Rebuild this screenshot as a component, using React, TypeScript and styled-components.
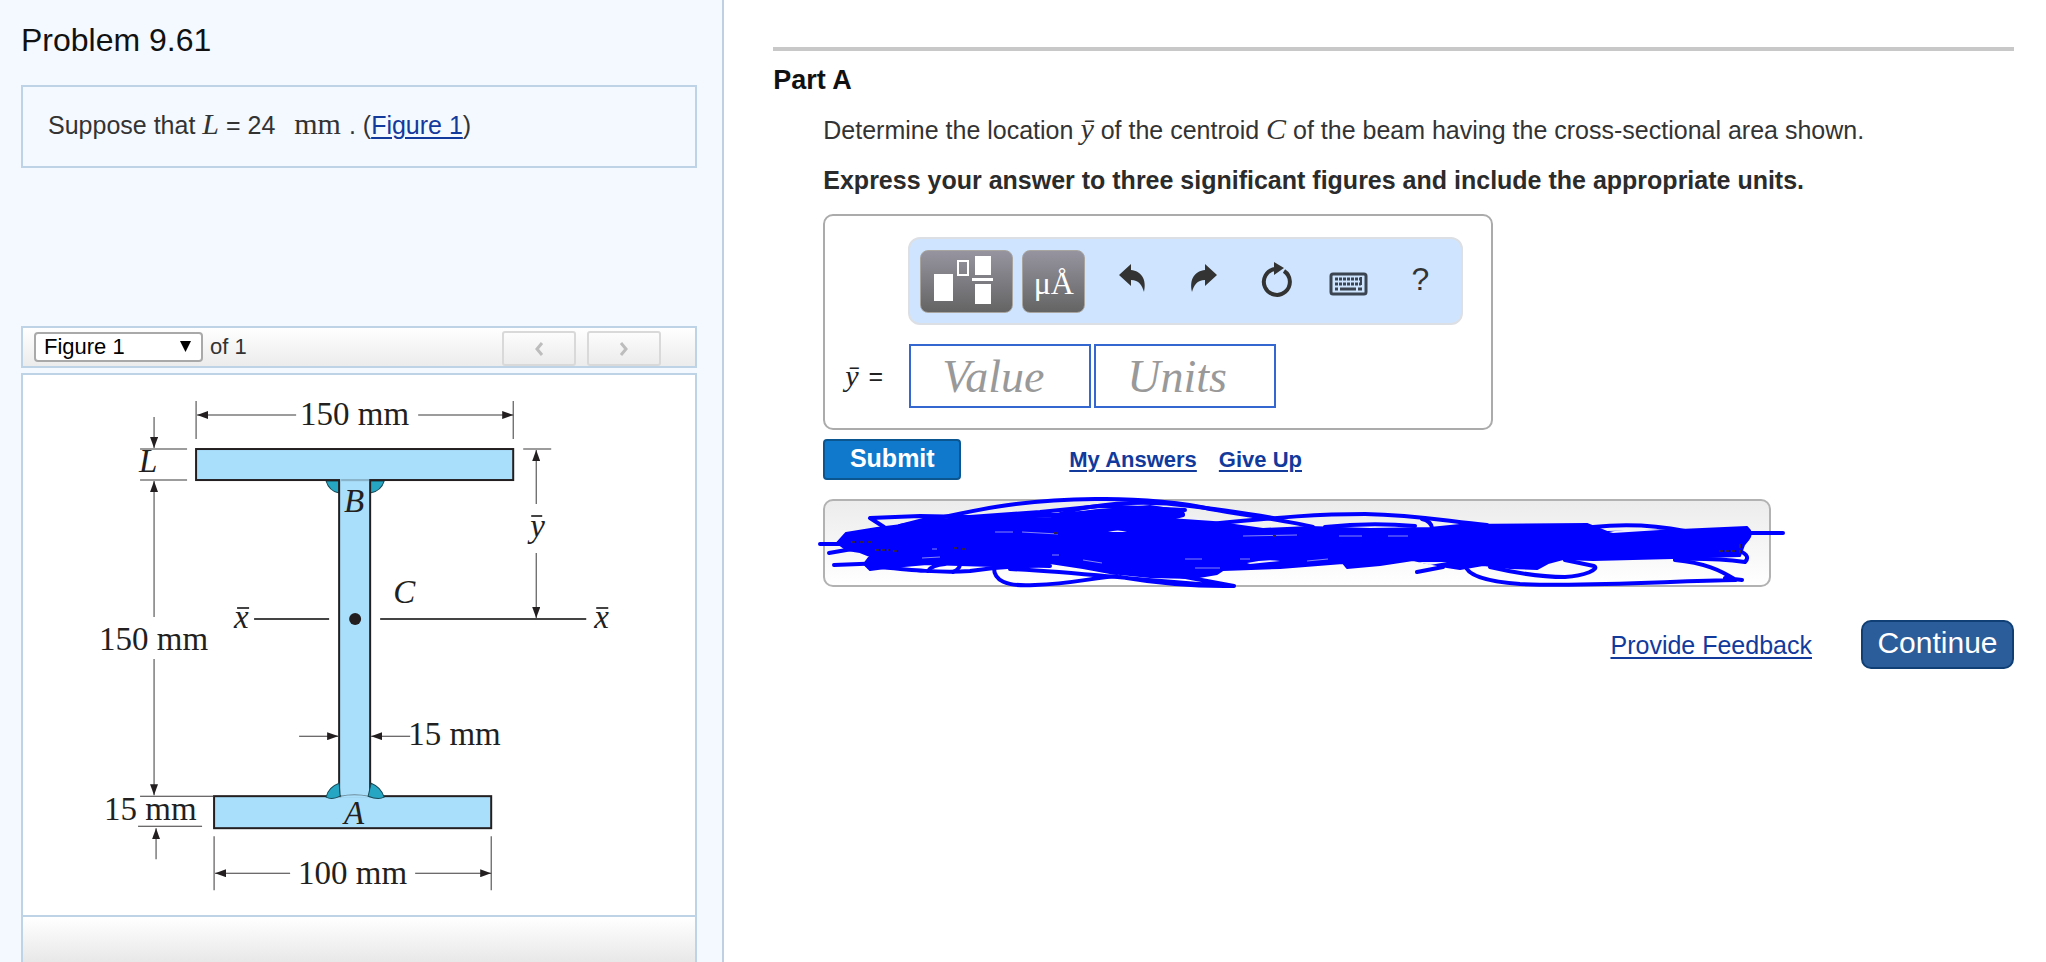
import React from "react";
import styled, { createGlobalStyle } from "styled-components";

const sans = '"Liberation Sans", Arial, sans-serif';
const serif = '"Liberation Serif", "Times New Roman", serif';

const GlobalStyle = createGlobalStyle`
  * { box-sizing: border-box; }
  body { margin: 0; background: #fff; color: #333; font-family: ${sans}; font-size: 25px; line-height: 32px; }
  h1, h2, p { margin: 0; }
`;

const Page = styled.div`
  display: grid;
  grid-template-columns: minmax(480px, 354fr) 646fr;
  min-height: 100vh;
`;

const Sidebar = styled.aside`
  display: flex;
  flex-direction: column;
  padding: 22px 25px 0 21px;
  background: #f4f9ff;
  border-right: 2px solid #bfd0e2;
`;

const ProblemTitle = styled.h1`
  color: #111;
  font-size: 32px;
  font-weight: 400;
  line-height: 36px;
`;

const Prompt = styled.p`
  margin-top: 27px;
  padding: 22px 25px 25px;
  border: 2px solid #bfd3e6;
`;

const Link = styled.a<{ $bold?: boolean }>`
  color: #123a9c;
  font-size: ${(p) => (p.$bold ? "22px" : "inherit")};
  font-weight: ${(p) => (p.$bold ? 700 : 400)};
  text-decoration: underline;
  text-decoration-thickness: 2px;
  text-underline-offset: 3px;
`;

const MathSymbol = styled.i`
  font-family: ${serif};
  font-size: 30px;
  line-height: 1;
`;

const Unit = styled.span`
  margin: 0 8px 0 12px;
  font-family: ${serif};
  font-size: 30px;
  line-height: 1;
`;

const FigureBar = styled.div`
  display: flex;
  align-items: center;
  gap: 7px;
  height: 42px;
  margin-top: 158px;
  padding: 0 34px 0 11px;
  background: linear-gradient(#fff, #ececec);
  border: 2px solid #bfd3e6;
  font-size: 22px;
  line-height: 28px;
`;

const SelectWrap = styled.div`
  position: relative;
  width: 169px;
  height: 30px;
`;

const FigureSelect = styled.select`
  width: 100%;
  height: 100%;
  padding: 0 8px;
  appearance: none;
  background: #fff;
  border: 2px solid #a9a9a9;
  border-radius: 4px;
  color: #000;
  font-family: ${sans};
  font-size: 22px;
  line-height: 24px;
`;

const SelectArrow = styled.svg`
  position: absolute;
  top: 9px;
  right: 12px;
  pointer-events: none;
`;

const Pager = styled.div`
  display: flex;
  align-self: flex-end;
  gap: 11px;
  margin-left: auto;
`;

const PagerButton = styled.button`
  display: flex;
  align-items: center;
  justify-content: center;
  width: 74px;
  height: 35px;
  padding: 0;
  background: linear-gradient(#fcfcfc, #ececec);
  border: 2px solid #d9d9d9;
  border-radius: 3px;
`;

const FigurePanel = styled.figure`
  margin: 5px 0 0;
  background: #fff;
  border: 2px solid #bfd3e6;
  svg { display: block; width: 100%; }
`;

const FigureFooter = styled.div`
  flex: 1;
  min-height: 44px;
  background: linear-gradient(#fff, #e8e8e8);
  border: solid #bfd3e6;
  border-width: 0 2px;
`;

const Main = styled.main`
  padding: 47px 32px 40px 49px;
`;

const PartTitle = styled.h2`
  padding-top: 13px;
  border-top: 4px solid #c8c8c8;
  color: #111;
  font-size: 27px;
  line-height: 32px;
`;

const Part = styled.form`
  display: flex;
  flex-direction: column;
  align-items: flex-start;
  gap: 18px;
  padding: 18px 0 0 50px;
`;

const Instruction = styled.p`
  color: #2b2b2b;
  font-weight: 700;
`;

const AnswerBox = styled.div`
  display: grid;
  grid-template-columns: 64px auto;
  row-gap: 19px;
  width: 670px;
  max-width: 100%;
  padding: 21px 28px 20px 19px;
  border: 2px solid #ababab;
  border-radius: 10px;
`;

const Toolbar = styled.div`
  grid-column: 2;
  display: flex;
  align-items: center;
  height: 88px;
  padding: 0 10px;
  background: #cfe5ff;
  border: 2px solid #dcdfe4;
  border-radius: 12px;
`;

const PaletteButton = styled.button<{ $wide?: boolean }>`
  width: ${(p) => (p.$wide ? 93 : 63)}px;
  height: 63px;
  margin-right: 9px;
  padding: ${(p) => (p.$wide ? "0" : "4px 0 0")};
  background: linear-gradient(#96949f, #646464);
  border: 1px solid #a8a4a0;
  border-radius: 8px;
  color: #fff;
  font-family: ${serif};
  font-size: 32px;
  svg { display: block; }
`;

const ToolGroup = styled.div`
  display: flex;
  gap: 32px;
  margin-left: 18px;
  padding-bottom: 4px;
`;

const ToolButton = styled.button`
  width: 40px;
  height: 40px;
  padding: 0;
  background: none;
  border: 0;
  color: #333;
  font-family: ${sans};
  font-size: 32px;
  line-height: 40px;
  svg { display: block; }
`;

const AnswerLabel = styled.label`
  display: flex;
  align-items: center;
  gap: 10px;
  padding-left: 1px;
  color: #222;
`;

const Fields = styled.div`
  display: flex;
  gap: 3px;
  padding-left: 1px;
`;

const Field = styled.input`
  width: 182px;
  height: 64px;
  padding: 0 0 0 31px;
  background: #fff;
  border: 2px solid #3468d0;
  font: italic 46px ${serif};
  &::placeholder { color: #999; opacity: 1; }
`;

const Actions = styled.div`
  display: flex;
  align-items: center;
  margin: -9px 0 1px;
`;

const SubmitButton = styled.button`
  width: 138px;
  height: 41px;
  margin-right: 108px;
  padding: 0 0 2px;
  background: #1079cc;
  border: 2px solid #0b5590;
  border-radius: 4px;
  color: #fff;
  font: 700 25px ${sans};
`;

const ActionLinks = styled.div`
  display: flex;
  gap: 22px;
`;

const Feedback = styled.div`
  position: relative;
  width: 948px;
  max-width: 100%;
  height: 88px;
  background: linear-gradient(#ececec, #fff);
  border: 2px solid #b2b2b2;
  border-radius: 10px;
`;

const Scribble = styled.svg`
  position: absolute;
  top: -11px;
  left: -15px;
`;

const PageFooter = styled.footer`
  display: flex;
  align-items: center;
  justify-content: flex-end;
  gap: 49px;
  margin-top: 33px;
`;

const ContinueButton = styled.button`
  width: 153px;
  height: 49px;
  padding: 0 0 4px;
  background: #2b5d9b;
  border: 2px solid #0f3f74;
  border-radius: 10px;
  color: #fff;
  font: 30px ${sans};
`;

function BeamFigure() {
  const beam = { fill: "#a9dffb", stroke: "#231f20", strokeWidth: 2 };
  const weld = { fill: "#27a6c4", stroke: "#164a58", strokeWidth: 1 };
  return (
    <svg viewBox="23 375 672 540" role="img" aria-label="I-beam cross section with dimensions">
      <defs>
        <marker id="tip" viewBox="0 0 11 8" refX="11" refY="4" markerWidth="11" markerHeight="8" markerUnits="userSpaceOnUse" orient="auto">
          <path d="M0 0L11 4L0 8Z" fill="#231f20" />
        </marker>
      </defs>
      <path d="M326 481Q329 491 339 493V481Z" {...weld} />
      <path d="M384 481Q381 491 370 493V481Z" {...weld} />
      <rect x="339" y="480" width="31" height="317" {...beam} />
      <rect x="196" y="449" width="317" height="31" {...beam} />
      <rect x="214" y="796" width="277" height="32" {...beam} />
      <path d="M340 480H369M341 796H369" stroke="#a9dffb" strokeWidth="3" />
      <path d="M341 480H369M340 796Q354 793 369 796" fill="none" stroke="#6d8997" strokeWidth="1" />
      <path d="M339 783Q328 787 326 797Q332 800 340 796Z" {...weld} />
      <path d="M371 783Q381 787 384 797Q378 800 368 796Z" {...weld} />

      <g fill="none" stroke="#3c3a3a" strokeWidth="1">
        <path d="M196 401V439M513 401V439M140 449H187M140 480H187M523 449H551M140 796H214M138 826H202M214 836V890M491 836V890" />
        <path d="M296 415H197" markerEnd="url(#tip)" />
        <path d="M418 415H513" markerEnd="url(#tip)" />
        <path d="M154 417V448" markerEnd="url(#tip)" />
        <path d="M154 617V481" markerEnd="url(#tip)" />
        <path d="M154 659V795" markerEnd="url(#tip)" />
        <path d="M156 859V828" markerEnd="url(#tip)" />
        <path d="M536 504V450" markerEnd="url(#tip)" />
        <path d="M536 553V618" markerEnd="url(#tip)" />
        <path d="M299 736H338" markerEnd="url(#tip)" />
        <path d="M410 736H371" markerEnd="url(#tip)" />
        <path d="M290 873H215" markerEnd="url(#tip)" />
        <path d="M415 873H491" markerEnd="url(#tip)" />
      </g>
      <path d="M254 619H329M380 619H586" stroke="#444" strokeWidth="2" />
      <path d="M237 608H249M596 608H608M531 516H542" stroke="#444" strokeWidth="2" />
      <circle cx="355" cy="619" r="6" fill="#231f20" />

      <g fill="#231f20" fontFamily={serif} fontSize="33">
        <text x="300" y="425">150 mm</text>
        <text x="99" y="650">150 mm</text>
        <text x="104" y="820">15 mm</text>
        <text x="408" y="745">15 mm</text>
        <text x="298" y="884">100 mm</text>
        <g fontStyle="italic">
          <text x="139" y="472">L</text>
          <text x="344" y="512">B</text>
          <text x="393" y="603">C</text>
          <text x="344" y="824">A</text>
          <text x="530" y="537">y</text>
          <text x="234" y="628">x</text>
          <text x="594" y="628">x</text>
        </g>
      </g>
    </svg>
  );
}

function BlueScribble() {
  return (
    <Scribble width="990" height="105" viewBox="0 0 990 105" aria-hidden="true">
      <path
        fill="#00f"
        stroke="#00f"
        strokeWidth="2"
        strokeLinejoin="round"
        d="M36 43L67 38L92 35L133 31L200 29L245 28L330 27L403 32L453 39L500 37L560 39L620 38L650 35L777 34L797 42L870 40L937 37Q944 43 938 50L934 55L930 66L863 68L783 70L753 69L738 73L727 79L700 78L673 75L650 79L637 77L603 70L570 75L537 78L533 73L470 78L413 80L407 84L383 88L340 87L300 83L273 78L240 73L183 76L150 75L117 74L83 77L60 80L54 74L60 66L50 62L37 60L27 53Z"
      />
      <path d="M245 28L255 24L290 19L340 15L373 20L372 26L345 31Z" fill="#00f" />
      <g fill="none" stroke="#00f" strokeWidth="4" strokeLinecap="round" strokeLinejoin="round">
        <path d="M10 54H48M19 63L48 58M24 75L75 73" />
        <path d="M74 37L60 28L110 26L160 27L230 22L290 16L375 20" />
        <path d="M90 36C150 25 190 10 285 9C330 8 380 14 400 19C440 26 480 31 503 37" />
        <path d="M90 36L125 27M150 31L240 24" />
        <path d="M240 32Q246 22 280 17Q330 9 380 16Q430 22 463 28" />
        <path d="M110 32C170 27 230 28 290 21L355 23Q374 20 373 25L350 31L400 34" />
        <path d="M400 34C470 27 510 24 555 24C610 25 640 32 677 35" />
        <path d="M515 37Q560 32 605 36M612 29Q621 31 622 38M783 37Q830 32 875 41" />
        <path d="M70 77C100 80 130 83 160 81Q200 75 240 76" />
        <path d="M118 81Q122 75 135 74M143 82Q152 78 149 72" />
        <path d="M184 78C184 90 195 97 225 95C260 94 282 88 307 86" />
        <path d="M200 79C280 83 320 90 424 96Q370 97 310 87M370 86L424 96" />
        <path d="M607 82L633 77M655 75C657 86 680 92 710 94C780 97 860 91 926 90C910 80 895 73 865 70M915 88L932 90" />
        <path d="M680 77C710 84 735 87 755 87C775 86 790 79 784 76L755 70" />
        <path d="M865 69Q905 68 935 72Q941 66 930 61M939 43H973" />
      </g>
      <path
        fill="none"
        stroke="#8585f6"
        strokeWidth="1"
        d="M185 42H203M212 42L248 44M122 59H127M112 68L130 67M242 65H249M433 46L487 45M529 46H552M578 46H598M375 69H392M385 78H410M430 69H440M497 71L518 69M273 70L292 73"
      />
      <path d="M298 42Q308 39 317 42ZM437 73Q455 69 470 71L440 74ZM608 72L637 72L620 75ZM799 42Q820 38 850 40L803 43ZM378 26L400 30L385 29Z" fill="#eef" />
      <path d="M41 52H47M50 52H54M58 52H64M65 60H79M83 61H87M144 58H147M152 59H156M244 43H250M463 46H466M909 61H926M930 54V63" fill="none" stroke="#302050" strokeWidth="2" strokeDasharray="4 2" />
    </Scribble>
  );
}

function TemplateIcon() {
  return (
    <svg width="91" height="61" viewBox="1 1 91 61" fill="#fff" aria-hidden="true">
      <path d="M14 24h19v27H14zM55 6h16v19H55zM52 28h21v3H52zM55 34h16v20H55z" />
      <rect x="38" y="11" width="10" height="14" fill="none" stroke="#fff" strokeWidth="2" />
    </svg>
  );
}

function UndoIcon({ flipped = false }: { flipped?: boolean }) {
  return (
    <svg width="40" height="40" viewBox="0 0 40 40" aria-hidden="true">
      <path
        fill="currentColor"
        transform={flipped ? "matrix(-1 0 0 1 40 0)" : undefined}
        d="M7 16L19 5V11C29 12 35 20 32 33C30 26 27 21 19 21V27Z"
      />
    </svg>
  );
}

function ResetIcon() {
  return (
    <svg width="40" height="40" viewBox="0 0 40 40" aria-hidden="true">
      <path d="M28 12A13 13 0 1 1 19 10" fill="none" stroke="currentColor" strokeWidth="4" />
      <path d="M18 3L28 9L18 16Z" fill="currentColor" />
    </svg>
  );
}

function KeyboardIcon() {
  return (
    <svg width="40" height="40" viewBox="0 0 40 40" fill="none" stroke="#3b4450" aria-hidden="true">
      <rect x="3" y="15" width="35" height="20" rx="2" strokeWidth="3" />
      <path d="M7 20H32M7 25H33" strokeWidth="3" strokeDasharray="3 1" />
      <path d="M33 18V26" strokeWidth="2" />
      <path d="M7 30H10M12 30H28M30 30H34" strokeWidth="3" />
    </svg>
  );
}

function Chevron({ d }: { d: string }) {
  return (
    <svg width="12" height="18" viewBox="0 0 12 18" fill="none" stroke="#bdbdbd" strokeWidth="3" aria-hidden="true">
      <path d={d} />
    </svg>
  );
}

export default function App() {
  return (
    <>
      <GlobalStyle />
      <Page>
        <Sidebar>
          <ProblemTitle>Problem 9.61</ProblemTitle>
          <Prompt>
            Suppose that <MathSymbol>L</MathSymbol> = 24 <Unit>mm</Unit>. (<Link href="#figure">Figure 1</Link>)
          </Prompt>
          <FigureBar>
            <SelectWrap>
              <FigureSelect aria-label="Figure">
                <option>Figure 1</option>
              </FigureSelect>
              <SelectArrow width="11" height="11" viewBox="0 0 12 12" aria-hidden="true">
                <path d="M0 0H12L6 12Z" />
              </SelectArrow>
            </SelectWrap>
            <span>of 1</span>
            <Pager>
              <PagerButton type="button" aria-label="Previous figure" disabled>
                <Chevron d="M9 3L4 9L9 15" />
              </PagerButton>
              <PagerButton type="button" aria-label="Next figure" disabled>
                <Chevron d="M3 3L8 9L3 15" />
              </PagerButton>
            </Pager>
          </FigureBar>
          <FigurePanel id="figure">
            <BeamFigure />
          </FigurePanel>
          <FigureFooter />
        </Sidebar>

        <Main>
          <PartTitle>Part A</PartTitle>
          <Part onSubmit={(e: React.FormEvent) => e.preventDefault()}>
            <p>
              Determine the location <MathSymbol>ȳ</MathSymbol> of the centroid <MathSymbol>C</MathSymbol> of the beam
              having the cross-sectional area shown.
            </p>
            <Instruction>
              Express your answer to three significant figures and include the appropriate units.
            </Instruction>
            <AnswerBox>
              <Toolbar role="toolbar" aria-label="Answer tools">
                <PaletteButton type="button" $wide aria-label="Templates">
                  <TemplateIcon />
                </PaletteButton>
                <PaletteButton type="button">μÅ</PaletteButton>
                <ToolGroup>
                  <ToolButton type="button" aria-label="Undo"><UndoIcon /></ToolButton>
                  <ToolButton type="button" aria-label="Redo"><UndoIcon flipped /></ToolButton>
                  <ToolButton type="button" aria-label="Reset"><ResetIcon /></ToolButton>
                  <ToolButton type="button" aria-label="Keyboard shortcuts"><KeyboardIcon /></ToolButton>
                  <ToolButton type="button">?</ToolButton>
                </ToolGroup>
              </Toolbar>
              <AnswerLabel htmlFor="value">
                <MathSymbol>ȳ</MathSymbol>
                <span>=</span>
              </AnswerLabel>
              <Fields>
                <Field id="value" placeholder="Value" />
                <Field aria-label="Units" placeholder="Units" />
              </Fields>
            </AnswerBox>
            <Actions>
              <SubmitButton type="submit">Submit</SubmitButton>
              <ActionLinks>
                <Link $bold href="#answers">My Answers</Link>
                <Link $bold href="#give-up">Give Up</Link>
              </ActionLinks>
            </Actions>
            <Feedback>
              <BlueScribble />
            </Feedback>
          </Part>
          <PageFooter>
            <Link href="#feedback">Provide Feedback</Link>
            <ContinueButton type="button">Continue</ContinueButton>
          </PageFooter>
        </Main>
      </Page>
    </>
  );
}
